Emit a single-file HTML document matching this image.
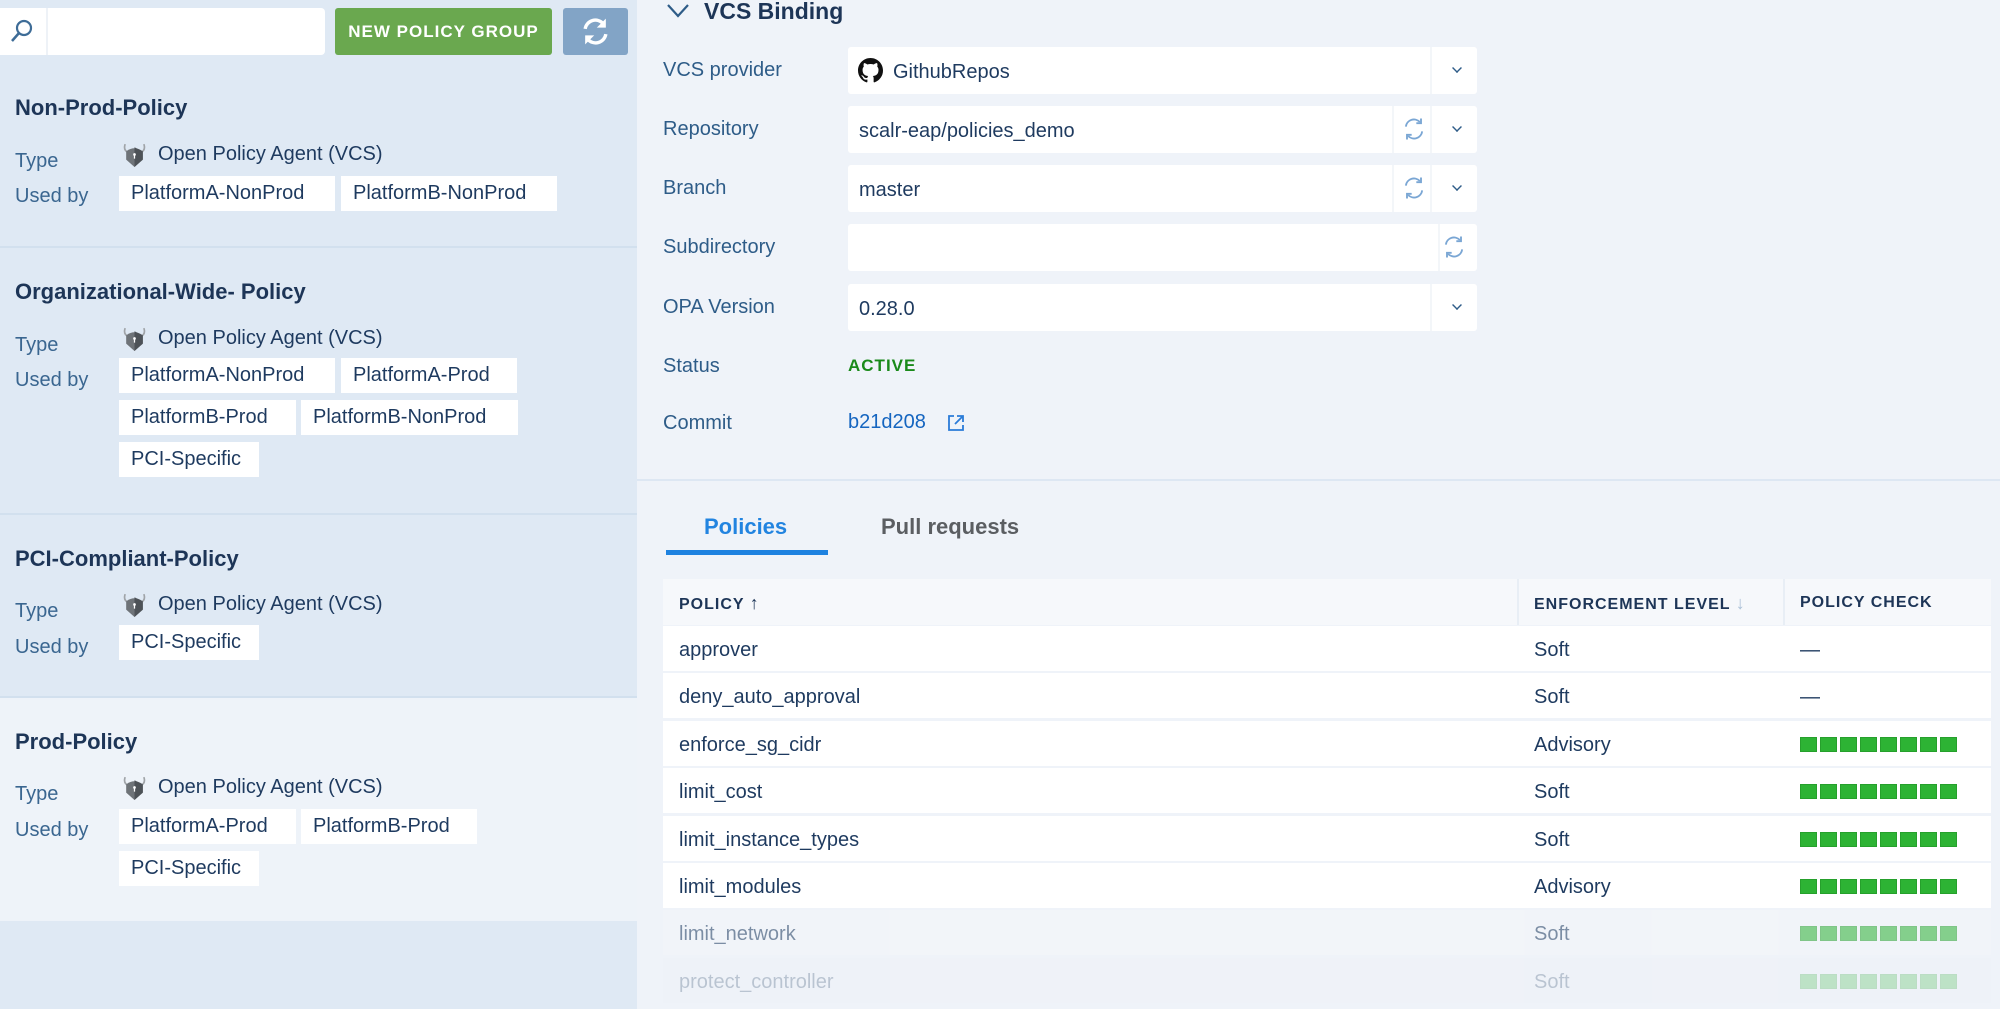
<!DOCTYPE html>
<html><head><meta charset="utf-8"><style>
*{margin:0;padding:0;box-sizing:border-box}
body{width:2000px;height:1009px;overflow:hidden;background:#eff3f9;font-family:"Liberation Sans",sans-serif;color:#1e3a5f;position:relative}
.a{position:absolute;white-space:nowrap}
#left{position:absolute;left:0;top:0;width:637px;height:1009px;background:#dfe9f4}
.sel{position:absolute;left:0;top:696px;width:637px;height:225px;background:#eef3f9}
.div{position:absolute;left:0;width:637px;height:2px;background:#d2e0ee}
.title{font-size:22px;font-weight:bold;color:#1d3557}
.lbl{font-size:20px;color:#3a6690}
.tag{position:absolute;background:#fff;height:35px;line-height:35px;font-size:20px;color:#1e3a5f;padding-left:12px}
.typ{font-size:20px;color:#1e3a5f}
.rl{font-size:20px;color:#2e5c88}
.inp{position:absolute;left:848px;width:629px;height:47px;background:#fff;border-radius:3px}
.inp span{position:absolute;left:11px;top:13px;font-size:20px;color:#1e3a5f}
.sep{position:absolute;top:0;width:2px;height:47px;background:#f3f6f9}
.chev{position:absolute;top:16px;width:10px;height:10px;border-right:2px solid #2e5c88;border-bottom:2px solid #2e5c88;transform:rotate(45deg) scale(.7)}
.row{position:absolute;left:663px;width:1328px;height:45px;background:#fff}
.row .c{position:absolute;top:13px;font-size:20px;color:#1e3a5f}
.bars{position:absolute;left:1137px;top:16px;display:flex;gap:3px}
.bars i{display:block;width:17px;height:15px;background:#2db334;border:1px solid #26a02c}
</style></head><body>
<div id="left"></div>
<div class="sel"></div>
<div class="div" style="top:246px"></div>
<div class="div" style="top:513px"></div>
<div class="div" style="top:696px"></div>
<div class="a" style="left:0;top:8px;width:325px;height:47px;background:#fff;border-radius:0 4px 4px 0"></div>
<div class="a" style="left:46px;top:8px;width:2px;height:47px;background:#eef2f7"></div>
<svg class="a" style="left:8px;top:17px" width="28" height="28" viewBox="0 0 28 28"><circle cx="16" cy="11" r="7" fill="none" stroke="#3e6c97" stroke-width="2.2"/><line x1="11" y1="16" x2="4" y2="24" stroke="#3e6c97" stroke-width="2.5"/></svg>
<div class="a" style="left:335px;top:8px;width:217px;height:47px;background:#6aa84f;border-radius:3px;color:#fff;font-size:17px;font-weight:bold;letter-spacing:1px;text-align:center;line-height:47px">NEW POLICY GROUP</div>
<div class="a" style="left:563px;top:8px;width:65px;height:47px;background:#82a4c6;border-radius:3px"></div>
<svg class="a" style="left:580px;top:16px" width="31" height="31" viewBox="0 0 24 24"><path d="M4 10a8 8 0 0 1 14-4" fill="none" stroke="#fff" stroke-width="2.6"/><path d="M20 14a8 8 0 0 1-14 4" fill="none" stroke="#fff" stroke-width="2.6"/><path d="M20 2v7h-7z" fill="#fff"/><path d="M4 22v-7h7z" fill="#fff"/></svg>

<div class="a title" style="left:15px;top:95px">Non-Prod-Policy</div>
<div class="a lbl" style="left:15px;top:150px">Type</div>
<div class="a lbl" style="left:15px;top:185px">Used by</div>
<div class="a typ" style="left:158px;top:143px">Open Policy Agent (VCS)</div>
<div class="tag" style="left:119px;top:176px;width:216px">PlatformA-NonProd</div>
<div class="tag" style="left:341px;top:176px;width:216px">PlatformB-NonProd</div>

<div class="a title" style="left:15px;top:279px">Organizational-Wide- Policy</div>
<div class="a lbl" style="left:15px;top:334px">Type</div>
<div class="a lbl" style="left:15px;top:369px">Used by</div>
<div class="a typ" style="left:158px;top:327px">Open Policy Agent (VCS)</div>
<div class="tag" style="left:119px;top:358px;width:216px">PlatformA-NonProd</div>
<div class="tag" style="left:341px;top:358px;width:176px">PlatformA-Prod</div>
<div class="tag" style="left:119px;top:400px;width:177px">PlatformB-Prod</div>
<div class="tag" style="left:301px;top:400px;width:217px">PlatformB-NonProd</div>
<div class="tag" style="left:119px;top:442px;width:140px">PCI-Specific</div>

<div class="a title" style="left:15px;top:546px">PCI-Compliant-Policy</div>
<div class="a lbl" style="left:15px;top:600px">Type</div>
<div class="a lbl" style="left:15px;top:636px">Used by</div>
<div class="a typ" style="left:158px;top:593px">Open Policy Agent (VCS)</div>
<div class="tag" style="left:119px;top:625px;width:140px">PCI-Specific</div>

<div class="a title" style="left:15px;top:729px">Prod-Policy</div>
<div class="a lbl" style="left:15px;top:783px">Type</div>
<div class="a lbl" style="left:15px;top:819px">Used by</div>
<div class="a typ" style="left:158px;top:776px">Open Policy Agent (VCS)</div>
<div class="tag" style="left:119px;top:809px;width:177px">PlatformA-Prod</div>
<div class="tag" style="left:301px;top:809px;width:176px">PlatformB-Prod</div>
<div class="tag" style="left:119px;top:851px;width:140px">PCI-Specific</div>

<svg width="0" height="0" style="position:absolute"><defs><g id="opa"><path d="M3 2 Q1 8 6 10 M21 2 Q23 8 18 10" fill="none" stroke="#a0a4a8" stroke-width="1.6"/><path d="M4 9 Q12 3 20 9 L20 17 L12 24 L4 17 Z" fill="#6e7378"/><path d="M12 5 L20 9 L20 17 L12 24Z" fill="#4d5257"/><circle cx="12" cy="12" r="1.3" fill="#fff"/><rect x="11.4" y="12" width="1.2" height="4" fill="#fff"/></g></defs></svg>
<svg class="a" style="left:122px;top:142px" width="25" height="26" viewBox="0 0 24 25"><use href="#opa"/></svg>
<svg class="a" style="left:122px;top:326px" width="25" height="26" viewBox="0 0 24 25"><use href="#opa"/></svg>
<svg class="a" style="left:122px;top:592px" width="25" height="26" viewBox="0 0 24 25"><use href="#opa"/></svg>
<svg class="a" style="left:122px;top:775px" width="25" height="26" viewBox="0 0 24 25"><use href="#opa"/></svg>

<svg class="a" style="left:665px;top:2px" width="26" height="18" viewBox="0 0 26 18"><path d="M3 3 L13 14 L23 3" fill="none" stroke="#2e5c88" stroke-width="2.2"/></svg>
<div class="a" style="left:704px;top:-2px;font-size:23px;font-weight:bold;color:#1d3557">VCS Binding</div>

<div class="a rl" style="left:663px;top:59px">VCS provider</div>
<div class="a rl" style="left:663px;top:118px">Repository</div>
<div class="a rl" style="left:663px;top:177px">Branch</div>
<div class="a rl" style="left:663px;top:236px">Subdirectory</div>
<div class="a rl" style="left:663px;top:296px">OPA Version</div>
<div class="a rl" style="left:663px;top:355px">Status</div>
<div class="a rl" style="left:663px;top:412px">Commit</div>

<div class="inp" style="top:47px"><svg style="position:absolute;left:10px;top:11px" width="25" height="25" viewBox="0 0 16 16"><path fill="#111" d="M8 0C3.58 0 0 3.580 0 8c0 3.54 2.29 6.53 5.47 7.59.4.07.55-.17.55-.38 0-.19-.01-.82-.01-1.49-2.01.37-2.530-.49-2.69-.94-.09-.23-.48-.94-.82-1.13-.28-.15-.68-.52-.01-.53.63-.01 1.08.58 1.23.82.72 1.21 1.87.87 2.33.66.07-.52.28-.87.51-1.07-1.78-.2-3.64-.89-3.64-3.95 0-.87.31-1.59.82-2.15-.08-.2-.36-1.02.08-2.12 0 0 .67-.21 2.2.82.64-.18 1.32-.27 2-.27.68 0 1.36.09 2 .27 1.53-1.04 2.2-.82 2.2-.82.44 1.1.16 1.92.08 2.12.51.56.82 1.27.82 2.15 0 3.07-1.87 3.75-3.65 3.95.29.25.54.73.54 1.48 0 1.07-.01 1.93-.01 2.2 0 .21.15.46.55.38A8.013 8.013 0 0016 8c0-4.42-3.58-8-8-8z"/></svg><span style="left:45px;top:14px">GithubRepos</span><div class="sep" style="left:582px"></div><div class="chev" style="left:604px"></div></div>
<div class="inp" style="top:106px"><span style="top:14px">scalr-eap/policies_demo</span><div class="sep" style="left:544px"></div><div class="sep" style="left:582px"></div><div class="chev" style="left:604px"></div></div>
<div class="inp" style="top:165px"><span style="top:14px">master</span><div class="sep" style="left:544px"></div><div class="sep" style="left:582px"></div><div class="chev" style="left:604px"></div></div>
<div class="inp" style="top:224px"><div class="sep" style="left:590px"></div></div>
<div class="inp" style="top:284px"><span style="top:14px">0.28.0</span><div class="sep" style="left:582px"></div><div class="chev" style="left:604px"></div></div>
<svg width="0" height="0" style="position:absolute"><defs><g id="rf"><path d="M5 10a7 7 0 0 1 12-4" fill="none" stroke="#7aa6d4" stroke-width="1.6"/><path d="M19 14a7 7 0 0 1-12 4" fill="none" stroke="#7aa6d4" stroke-width="1.6"/><path d="M18 3v4h-4" fill="none" stroke="#7aa6d4" stroke-width="1.6"/><path d="M6 21v-4h4" fill="none" stroke="#7aa6d4" stroke-width="1.6"/></g></defs></svg>
<svg class="a" style="left:1400px;top:115px" width="28" height="28" viewBox="0 0 24 24"><use href="#rf"/></svg>
<svg class="a" style="left:1400px;top:174px" width="28" height="28" viewBox="0 0 24 24"><use href="#rf"/></svg>
<svg class="a" style="left:1440px;top:233px" width="28" height="28" viewBox="0 0 24 24"><use href="#rf"/></svg>

<div class="a" style="left:848px;top:356px;font-size:17px;font-weight:bold;color:#1a8a1a;letter-spacing:1px">ACTIVE</div>
<div class="a" style="left:848px;top:411px;font-size:20px;color:#1565c0">b21d208</div>
<svg class="a" style="left:946px;top:413px" width="20" height="20" viewBox="0 0 20 20"><path d="M8 3H3v14h14v-5" fill="none" stroke="#2a7bd8" stroke-width="1.8"/><path d="M11 3h6v6M17 3L9 11" fill="none" stroke="#2a7bd8" stroke-width="1.8"/></svg>

<div class="a" style="left:637px;top:479px;width:1363px;height:2px;background:#dde7f3"></div>
<div class="a" style="left:704px;top:514px;font-size:22px;font-weight:bold;color:#2284e0">Policies</div>
<div class="a" style="left:881px;top:514px;font-size:22px;font-weight:bold;color:#5b5e62">Pull requests</div>
<div class="a" style="left:666px;top:550px;width:162px;height:5px;background:#1e82e0"></div>

<div class="a" style="left:663px;top:579px;width:1328px;height:46px;background:#f6f8fb"></div>
<div class="a" style="left:1517px;top:579px;width:2px;height:46px;background:#e8eef5"></div>
<div class="a" style="left:1783px;top:579px;width:2px;height:46px;background:#e8eef5"></div>
<div class="a" style="left:679px;top:593px;font-size:16px;font-weight:bold;color:#1d3557;letter-spacing:1px">POLICY <span style="font-size:18px">↑</span></div>
<div class="a" style="left:1534px;top:593px;font-size:16px;font-weight:bold;color:#1d3557;letter-spacing:1px">ENFORCEMENT LEVEL <span style="color:#a9bfd6;font-size:18px">↓</span></div>
<div class="a" style="left:1800px;top:594px;font-size:16px;font-weight:bold;color:#1d3557;letter-spacing:1px">POLICY CHECK</div>

<div class="row" style="top:626px"><div class="c" style="left:16px">approver</div><div class="c" style="left:871px">Soft</div><div class="c" style="left:1137px">—</div></div>
<div class="row" style="top:673px"><div class="c" style="left:16px">deny_auto_approval</div><div class="c" style="left:871px">Soft</div><div class="c" style="left:1137px">—</div></div>
<div class="row" style="top:721px"><div class="c" style="left:16px">enforce_sg_cidr</div><div class="c" style="left:871px">Advisory</div><div class="bars"><i></i><i></i><i></i><i></i><i></i><i></i><i></i><i></i></div></div>
<div class="row" style="top:768px"><div class="c" style="left:16px">limit_cost</div><div class="c" style="left:871px">Soft</div><div class="bars"><i></i><i></i><i></i><i></i><i></i><i></i><i></i><i></i></div></div>
<div class="row" style="top:816px"><div class="c" style="left:16px">limit_instance_types</div><div class="c" style="left:871px">Soft</div><div class="bars"><i></i><i></i><i></i><i></i><i></i><i></i><i></i><i></i></div></div>
<div class="row" style="top:863px"><div class="c" style="left:16px">limit_modules</div><div class="c" style="left:871px">Advisory</div><div class="bars"><i></i><i></i><i></i><i></i><i></i><i></i><i></i><i></i></div></div>
<div class="row" style="top:910px;opacity:.55;background:#f4f6fa"><div class="c" style="left:16px">limit_network</div><div class="c" style="left:871px">Soft</div><div class="bars"><i></i><i></i><i></i><i></i><i></i><i></i><i></i><i></i></div></div>
<div class="row" style="top:958px;opacity:.25;background:#eef1f6"><div class="c" style="left:16px">protect_controller</div><div class="c" style="left:871px">Soft</div><div class="bars"><i></i><i></i><i></i><i></i><i></i><i></i><i></i><i></i></div></div>
</body></html>
